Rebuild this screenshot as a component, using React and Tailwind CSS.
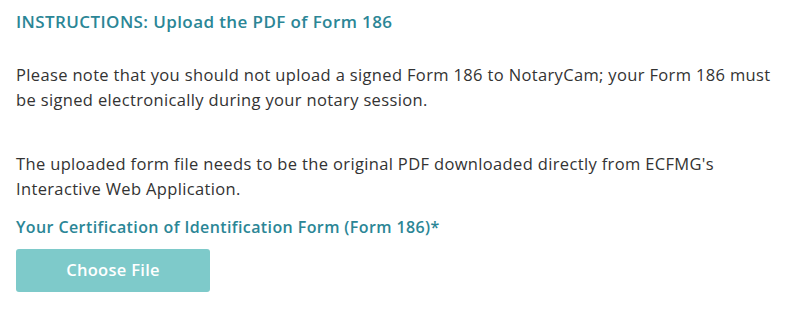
export default function App() {
  return (
    <div className="w-[800px] h-[314px] bg-white px-4 pt-[9px]" style={{ fontFamily: '"Open Sans", "Lato", sans-serif' }}>
      <h2 className="text-[17px] font-semibold leading-[25px] tracking-[0.4px] text-[#2b8696]">INSTRUCTIONS: Upload the PDF of Form 186</h2>
      <p className="mt-[28px] text-[16.5px] leading-[25px] tracking-[0.35px] text-[#333]">
        Please note that you should not upload a signed Form 186 to NotaryCam; your Form 186 must be signed electronically during your notary session.
      </p>
      <p className="mt-[39px] text-[16.5px] leading-[25px] tracking-[0.35px] text-[#333]">
        The uploaded form file needs to be the original PDF downloaded directly from ECFMG's Interactive Web Application.
      </p>
      <div className="mt-[14px] text-[16px] font-semibold leading-[25px] tracking-[0.4px] text-[#2b8696]">Your Certification of Identification Form (Form 186)*</div>
      <button className="mt-[9px] w-[194px] h-[43px] rounded-[3px] bg-[#7ecaca] text-white text-[16.5px] font-semibold tracking-[0.3px]">Choose File</button>
    </div>
  );
}
